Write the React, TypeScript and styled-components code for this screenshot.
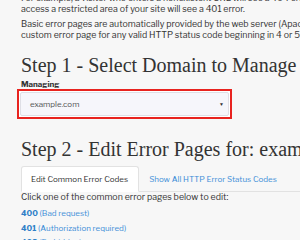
import styled, { createGlobalStyle } from "styled-components";

const GlobalStyle = createGlobalStyle`
  html, body {
    margin: 0;
    padding: 0;
    background: #f7f7f7;
    overflow: hidden;
  }
  body {
    font-family: "Libre Franklin", "Liberation Sans", Arial, sans-serif;
    color: #333;
  }
`;

const Page = styled.main`
  width: 420px;
  padding: 0 21px;
  margin-top: -7px;
`;

const Para = styled.p`
  margin: 0 0 5px;
  font-size: 8.8px;
  line-height: 10.7px;
  white-space: nowrap;
`;

const Heading = styled.h2<{ $gap?: number }>`
  margin: ${(p) => p.$gap ?? 13}px 0 3px;
  font-family: "Liberation Serif", "Times New Roman", serif;
  font-weight: 400;
  font-size: 20px;
  line-height: 22px;
  color: #333;
  white-space: nowrap;
`;

const Label = styled.div`
  font-size: 8px;
  font-weight: 700;
  color: #333;
  line-height: 10px;
`;

const Highlight = styled.div`
  width: 209px;
  margin-left: -4px;
  border: 2px solid #e8231f;
  padding: 1px;
  background: #fff;
`;

const SelectBox = styled.div`
  display: flex;
  align-items: center;
  justify-content: space-between;
  height: 22px;
  padding: 0 4px 0 9px;
  border: 1px solid #dfdfe6;
  border-radius: 2px;
  background: #f6f6fb;
  font-size: 8px;
  color: #555;
`;

const Caret = styled.span`
  font-size: 5px;
  color: #333;
`;

const Tabs = styled.div`
  display: flex;
  align-items: stretch;
  margin-top: 6.5px;
  border-bottom: 1px solid #e2e2e2;
  margin-right: -21px;
`;

const Tab = styled.div<{ $active?: boolean }>`
  display: flex;
  align-items: center;
  height: 24px;
  padding: 0 10px 0 9px;
  margin-bottom: -1px;
  font-size: 8px;
  color: ${(p) => (p.$active ? "#333" : "#3f8fd8")};
  background: ${(p) => (p.$active ? "#fff" : "transparent")};
  border: 1px solid ${(p) => (p.$active ? "#e2e2e2" : "transparent")};
  border-bottom-color: ${(p) => (p.$active ? "#fff" : "transparent")};
  border-radius: 3px 3px 0 0;
`;

const Intro = styled.p`
  margin: 0 0 4px;
  font-size: 8.8px;
  line-height: 10px;
`;

const CodeList = styled.ul`
  list-style: none;
  margin: 0;
  padding: 0;
`;

const CodeItem = styled.li`
  font-size: 8px;
  line-height: 14.5px;
  color: #3f8fd8;
  b {
    font-weight: 700;
    color: #2f7fc8;
  }
`;

const codes = [
  ["400", "Bad request"],
  ["401", "Authorization required"],
  ["403", "Forbidden"],
  ["404", "Not found"],
];

export default function App() {
  return (
    <>
      <GlobalStyle />
      <Page>
        <Para>
          For example, a visitor who enters a nonexistent URL will see a 404 error, and a visitor trying to
          <br />
          access a restricted area of your site will see a 401 error.
        </Para>
        <Para>
          Basic error pages are automatically provided by the web server (Apache). However, you can create a
          <br />
          custom error page for any valid HTTP status code beginning in 4 or 5.
        </Para>
        <Heading>Step 1 - Select Domain to Manage</Heading>
        <Label>Managing</Label>
        <Highlight>
          <SelectBox>
            <span>example.com</span>
            <Caret>▼</Caret>
          </SelectBox>
        </Highlight>
        <Heading $gap={19}>Step 2 - Edit Error Pages for: example.com</Heading>
        <Tabs>
          <Tab $active>Edit Common Error Codes</Tab>
          <Tab>Show All HTTP Error Status Codes</Tab>
        </Tabs>
        <Intro>Click one of the common error pages below to edit:</Intro>
        <CodeList>
          {codes.map(([code, text]) => (
            <CodeItem key={code}>
              <b>{code}</b> ({text})
            </CodeItem>
          ))}
        </CodeList>
      </Page>
    </>
  );
}
